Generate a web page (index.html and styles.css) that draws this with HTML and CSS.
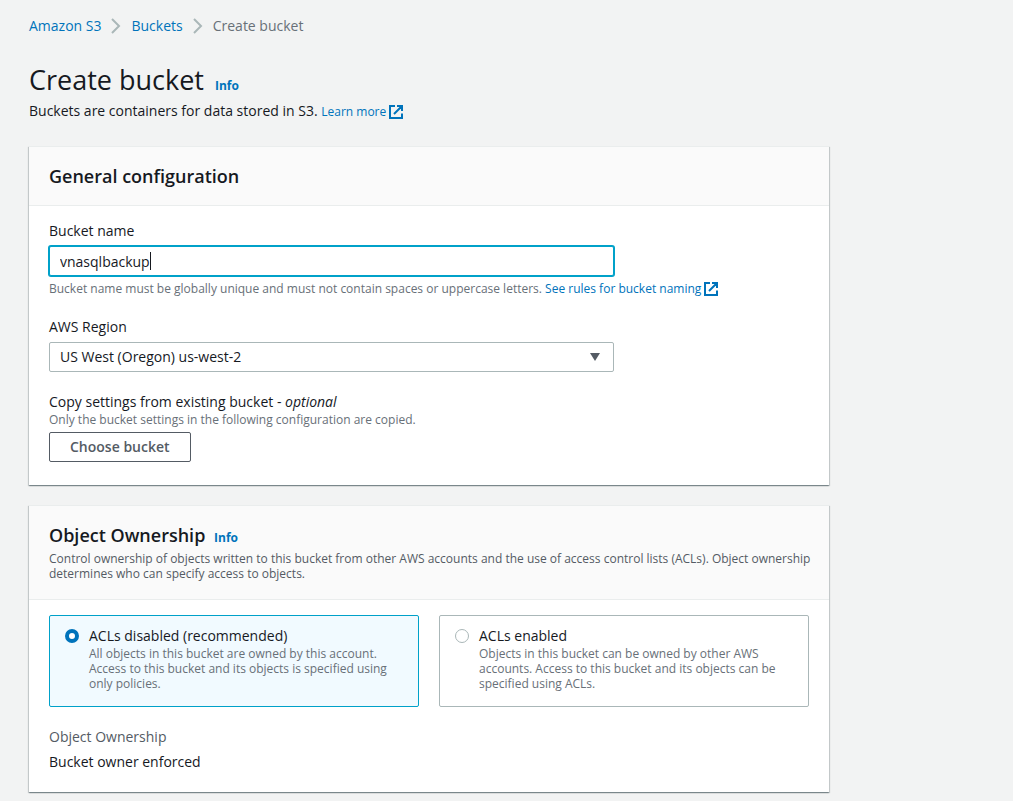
FILE: index.html
```html
<!DOCTYPE html>
<html lang="en">
<head>
    <meta charset="UTF-8">
    <meta name="viewport" content="width=device-width, initial-scale=1.0">
    <title>Create bucket</title>
    <link rel="stylesheet" href="styles.css">
</head>
<body>
    <div class="page">
        <nav class="breadcrumb" aria-label="Breadcrumb">
            <a href="#">Amazon S3</a>
            <svg class="chevron" viewBox="0 0 10 16"><path d="M1 1l7 7-7 7"/></svg>
            <a href="#">Buckets</a>
            <svg class="chevron" viewBox="0 0 10 16"><path d="M1 1l7 7-7 7"/></svg>
            <span>Create bucket</span>
        </nav>

        <header class="page-header">
            <h1>Create bucket <a class="info" href="#">Info</a></h1>
            <p>Buckets are containers for data stored in S3.
                <a class="learn-more" href="#">Learn more <svg class="external" viewBox="0 0 14 14"><path d="M6 1H1v12h12V8.500M8 1h5v5M13 1L5 9"/></svg></a>
            </p>
        </header>

        <main class="cards">
            <section class="card">
                <div class="card-header">
                    <h2>General configuration</h2>
                </div>
                <div class="card-body">
                    <div class="field">
                        <label for="bucket-name">Bucket name</label>
                        <div class="control">
                            <input class="text-input" type="text" id="bucket-name" value="vnasqlbackup">
                            <span class="caret"></span>
                        </div>
                        <p class="hint">Bucket name must be globally unique and must not contain spaces or uppercase letters.
                            <a href="#">See rules for bucket naming <svg class="external" viewBox="0 0 14 14"><path d="M6 1H1v12h12V8.500M8 1h5v5M13 1L5 9"/></svg></a>
                        </p>
                    </div>
                    <div class="field">
                        <label for="region">AWS Region</label>
                        <div class="control">
                            <select class="select" id="region">
                                <option>US West (Oregon) us-west-2</option>
                            </select>
                            <svg class="arrow" viewBox="0 0 10 8"><path d="M0 0h10L5 8z"/></svg>
                        </div>
                    </div>
                    <div class="field">
                        <label for="choose-bucket">Copy settings from existing bucket - <em>optional</em></label>
                        <p class="description">Only the bucket settings in the following configuration are copied.</p>
                        <button class="button" type="button" id="choose-bucket">Choose bucket</button>
                    </div>
                </div>
            </section>

            <section class="card">
                <div class="card-header">
                    <h2>Object Ownership <a class="info" href="#">Info</a></h2>
                    <p>Control ownership of objects written to this bucket from other AWS accounts and the use of access control lists (ACLs). Object ownership determines who can specify access to objects.</p>
                </div>
                <div class="card-body">
                    <div class="tiles">
                        <label class="tile selected">
                            <input type="radio" name="acl" checked>
                            <span class="tile-text">
                                <span class="tile-title">ACLs disabled (recommended)</span>
                                <span class="tile-description">All objects in this bucket are owned by this account. Access to this bucket and its objects is specified using only policies.</span>
                            </span>
                        </label>
                        <label class="tile">
                            <input type="radio" name="acl">
                            <span class="tile-text">
                                <span class="tile-title">ACLs enabled</span>
                                <span class="tile-description">Objects in this bucket can be owned by other AWS accounts. Access to this bucket and its objects can be specified using ACLs.</span>
                            </span>
                        </label>
                    </div>
                    <dl class="summary">
                        <dt>Object Ownership</dt>
                        <dd>Bucket owner enforced</dd>
                    </dl>
                </div>
            </section>
        </main>
    </div>
</body>
</html>
```
FILE: styles.css
```css
* {
    box-sizing: border-box;
}
body {
    margin: 0;
    background-color: #f2f3f3;
    color: #16191f;
    font-family: "Open Sans", "Noto Sans", sans-serif;
    font-size: 14px;
    line-height: 20px;
}
h1, h2, p, dl, dd {
    margin: 0;
}
a {
    color: #0073bb;
    text-decoration: none;
}
a:hover {
    text-decoration: underline;
}
input, select, button {
    font: inherit;
    color: inherit;
}
.page {
    max-width: 858px;
    padding: 16px 29px 8px;
}
.breadcrumb {
    display: flex;
    align-items: center;
    gap: 10px;
    color: #687078;
}
.chevron {
    width: 10px;
    height: 16px;
    fill: none;
    stroke: #aab7b8;
    stroke-width: 2;
}
.page-header {
    padding: 23px 0 25px;
}
h1 {
    font-size: 27px;
    font-weight: 400;
    line-height: 42px;
}
.info {
    margin-left: 4px;
    font-size: 12px;
    font-weight: 700;
    line-height: 1;
}
.learn-more {
    font-size: 12px;
    line-height: 1;
}
.external {
    width: 14px;
    height: 14px;
    vertical-align: -3px;
    fill: none;
    stroke: #0073bb;
    stroke-width: 2;
}
.cards {
    display: grid;
    gap: 20px;
}
.card {
    background-color: #fff;
    box-shadow: 0 1px 1px 0 rgba(0, 28, 36, 0.3), 1px 1px 1px 0 rgba(0, 28, 36, 0.15), -1px 1px 1px 0 rgba(0, 28, 36, 0.15);
    border-top: 1px solid #eaeded;
}
.card-header {
    padding: 18px 12px 18px 20px;
    background-color: #fafafa;
    border-bottom: 1px solid #eaeded;
}
h2 {
    font-size: 18px;
    font-weight: 600;
    line-height: 22px;
}
.card-header p {
    padding-top: 5px;
    color: #545b64;
    font-size: 12px;
    line-height: 15px;
}
.card-body {
    padding: 15px 20px 20px;
}
.field + .field {
    margin-top: 20px;
}
.field label {
    display: block;
}
.control {
    position: relative;
    max-width: 565px;
    margin-top: 5px;
}
.text-input, .select {
    display: block;
    width: 100%;
    height: 30px;
    padding: 0 10px;
    background-color: #fff;
    border: 1px solid #aab7b8;
    border-radius: 2px;
    appearance: none;
}
.text-input {
    border-color: #00a1c9;
    box-shadow: 0 0 0 1px #00a1c9;
    outline: none;
}
.caret {
    position: absolute;
    top: 6px;
    left: 101px;
    width: 1px;
    height: 18px;
    background-color: #16191f;
}
.arrow {
    position: absolute;
    top: 11px;
    right: 14px;
    width: 10px;
    height: 8px;
    fill: #545b64;
    pointer-events: none;
}
.hint, .description {
    color: #687078;
    font-size: 12px;
    line-height: 16px;
}
.hint {
    padding-top: 5px;
}
.button {
    display: block;
    height: 30px;
    margin: 4px 0 3px;
    padding: 0 20px;
    background-color: #fff;
    border: 1px solid #545b64;
    border-radius: 2px;
    color: #545b64;
    font-weight: 600;
}
.tiles {
    display: grid;
    grid-template-columns: 1fr 1fr;
    gap: 20px;
}
.tile {
    display: flex;
    gap: 10px;
    padding: 10px 30px 15px 15px;
    border: 1px solid #aab7b8;
    border-radius: 2px;
}
.tile.selected {
    background-color: #f1faff;
    border-color: #00a1c9;
}
.tile input {
    flex: none;
    width: 14px;
    height: 14px;
    margin: 3px 0;
    background-color: #fff;
    border: 1px solid #aab7b8;
    border-radius: 50%;
    appearance: none;
}
.tile input:checked {
    border: 4px solid #0073bb;
}
.tile-title, .tile-description {
    display: block;
}
.tile-description {
    color: #687078;
    font-size: 12px;
    line-height: 15px;
}
.summary {
    padding-top: 20px;
}
.summary dt {
    color: #545b64;
}
.summary dd {
    margin-top: 5px;
}
```
